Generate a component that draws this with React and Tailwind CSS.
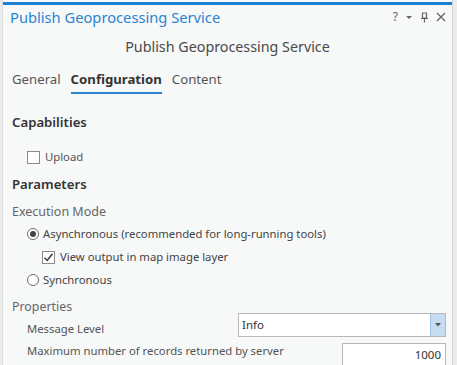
import { useState } from "react";

const font = { fontFamily: '"Noto Sans", "Open Sans", sans-serif' };

function Checkbox({ checked }) {
  return (
    <span className="flex h-[13px] w-[13px] shrink-0 items-center justify-center border border-[#8a8a8a] bg-white">
      {checked && (
        <svg width="11" height="11" viewBox="0 0 11 11">
          <path d="M1.5 5.8 L4.2 8.5 L9.5 1.8" fill="none" stroke="#333" strokeWidth="1.4" />
        </svg>
      )}
    </span>
  );
}

function Radio({ checked }) {
  return (
    <span className="flex h-[12px] w-[12px] shrink-0 items-center justify-center rounded-full border border-[#6e6e6e] bg-white">
      {checked && <span className="h-[6px] w-[6px] rounded-full bg-[#444]" />}
    </span>
  );
}

export default function App() {
  const [tab] = useState("Configuration");
  const tabs = ["General", "Configuration", "Content"];

  return (
    <div className="flex h-[365px] w-[457px] overflow-hidden bg-[#ececec]" style={font}>
      <div className="w-[3px] border-r border-[#dcdcdc]" />
      <div className="flex w-[450px] flex-col border-r border-[#d6d6d6] bg-[#f7f8f8] pt-[2px]">
        <div className="h-[3px] shrink-0 bg-[#1c7ed6]" />
        <div className="flex h-[24px] shrink-0 items-center justify-between pl-[7px] pr-[6px]">
          <span className="text-[14.7px] leading-none text-[#2a84d2]">Publish Geoprocessing Service</span>
          <div className="flex items-center gap-[7px] text-[12px] leading-none text-[#666]">
            <span>?</span>
            <svg width="8" height="8" viewBox="0 0 8 8">
              <path d="M1 3 L7 3 L4 6 Z" fill="#666" />
            </svg>
            <svg width="9" height="11" viewBox="0 0 9 11">
              <path d="M2.5 1 H6.5 V6 H2.5 Z M1 6.5 H8 M4.5 6.5 V10.5" fill="none" stroke="#666" strokeWidth="1.2" />
            </svg>
            <svg width="10" height="10" viewBox="0 0 10 10">
              <path d="M1 1 L9 9 M9 1 L1 9" stroke="#666" strokeWidth="1.3" />
            </svg>
          </div>
        </div>
        <div className="flex h-[36px] shrink-0 items-center justify-center text-[14.3px] leading-none text-[#4a4a4a]">
          Publish Geoprocessing Service
        </div>
        <div className="flex shrink-0 gap-[10px] pl-[9px] text-[13.2px]">
          {tabs.map((t) => (
            <div
              key={t}
              className={
                t === tab
                  ? "border-b-2 border-[#2a84d2] pt-[8px] pb-[5px] font-bold text-[#333]"
                  : "border-b-2 border-transparent pt-[8px] pb-[5px] text-[#555]"
              }
            >
              <div className="flex h-[14px] items-center">{t}</div>
            </div>
          ))}
        </div>
        <div className="flex flex-col pl-[9px] text-[#444]">
          <div className="mt-[19px] flex h-[20px] items-center text-[13.2px] font-semibold text-[#333]">Capabilities</div>
          <div className="mt-[14px] flex h-[20px] items-center gap-[5px] pl-[15px] text-[11.3px] text-[#555]">
            <Checkbox />
            <span>Upload</span>
          </div>
          <div className="mt-[8px] flex h-[20px] items-center text-[13.2px] font-semibold text-[#333]">Parameters</div>
          <div className="mt-[7px] flex h-[20px] items-center text-[12.5px] text-[#666]">Execution Mode</div>
          <div className="mt-[2px] flex h-[20px] items-center gap-[4px] pl-[15px] text-[11.3px] text-[#444]">
            <Radio checked />
            <span>Asynchronous (recommended for long-running tools)</span>
          </div>
          <div className="mt-[3px] flex h-[20px] items-center gap-[5px] pl-[30px] text-[11.3px] text-[#444]">
            <Checkbox checked />
            <span>View output in map image layer</span>
          </div>
          <div className="mt-[3px] flex h-[20px] items-center gap-[4px] pl-[15px] text-[11.3px] text-[#444]">
            <Radio />
            <span>Synchronous</span>
          </div>
          <div className="mt-[9px] flex h-[16px] items-center text-[12.4px] text-[#666]">Properties</div>
          <div className="-mt-[2px] flex items-start pl-[15px] pr-[6px]">
            <span className="mt-[8px] flex h-[16px] flex-1 items-center text-[11.3px] text-[#555]">Message Level</span>
            <div className="flex h-[24px] w-[208px] items-stretch border border-[#b8b8b8] bg-white">
              <span className="flex flex-1 items-center pl-[3px] text-[11.5px] text-[#333]">Info</span>
              <span className="flex w-[15px] items-center justify-center border-l border-[#9cc3e6] bg-[#c6dcf1]">
                <svg width="6" height="4" viewBox="0 0 6 4">
                  <path d="M0 0 H6 L3 3.5 Z" fill="#555" />
                </svg>
              </span>
            </div>
          </div>
          <div className="mt-[6px] flex items-start pl-[15px] pr-[6px]">
            <span className="flex h-[16px] flex-1 items-center text-[11.3px] text-[#555]">Maximum number of records returned by server</span>
            <div className="flex h-[24px] w-[104px] items-center justify-end border border-[#b8b8b8] bg-white pr-[4px] text-[11.5px] text-[#333]">
              1000
            </div>
          </div>
        </div>
      </div>
    </div>
  );
}
